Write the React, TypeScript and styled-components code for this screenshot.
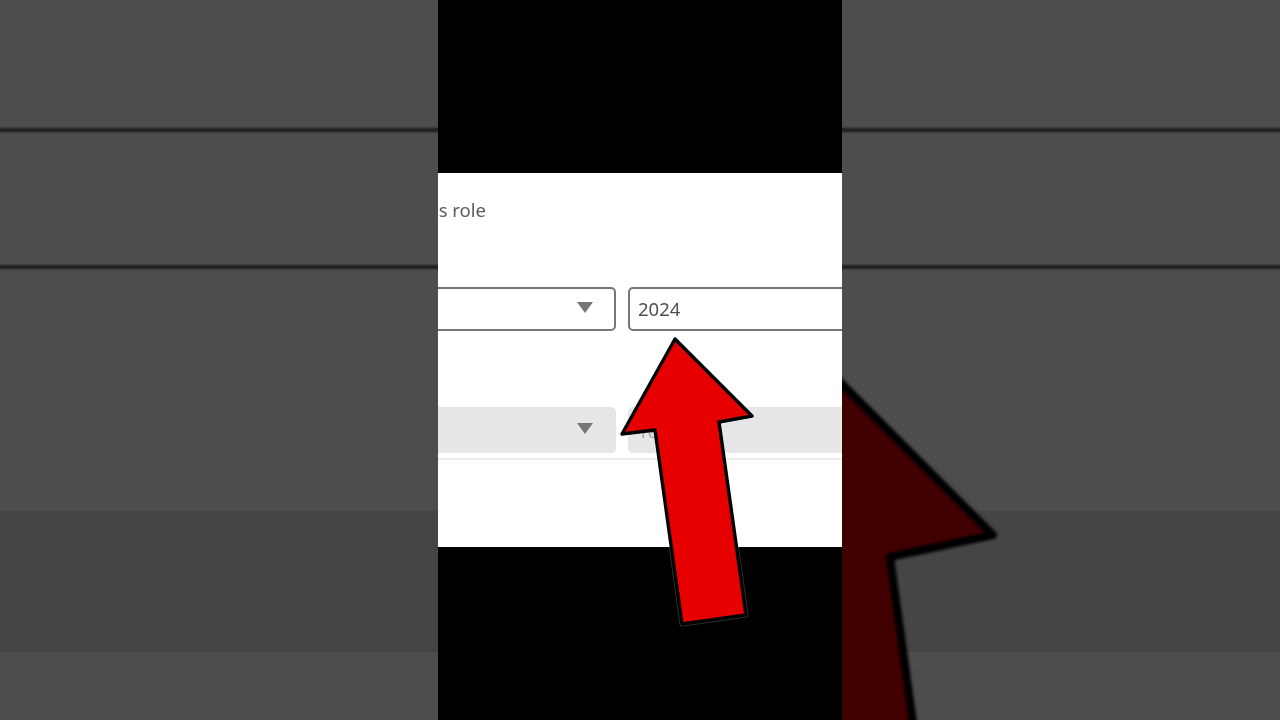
import styled, { createGlobalStyle } from "styled-components";

const GlobalStyle = createGlobalStyle`
    html, body {
        margin: 0;
        padding: 0;
        background: #000;
    }
    body {
        font-family: "Noto Sans", "Open Sans", sans-serif;
    }
`;

const Stage = styled.div`
    position: relative;
    display: flex;
    width: 1280px;
    height: 720px;
    overflow: hidden;
`;

const SidePanel = styled.div`
    position: relative;
    display: flex;
    flex-direction: column;
    width: 438px;
    height: 720px;
    background: #4d4d4d;
    overflow: hidden;
`;

const Spacer = styled.div<{ $h: number }>`
    height: ${(p) => p.$h}px;
    flex-shrink: 0;
`;

const Rule = styled.div`
    height: 4px;
    flex-shrink: 0;
    margin: 0 -6px;
    background: #1e1e1e;
    filter: blur(1px);
`;

const ShadeBand = styled.div`
    height: 141px;
    flex-shrink: 0;
    background: #454545;
`;

const FaintRule = styled.div`
    height: 2px;
    flex-shrink: 0;
    margin: 0 -6px;
    background: #484848;
    filter: blur(0.6px);
`;

const Center = styled.div`
    display: flex;
    flex-direction: column;
    width: 404px;
    height: 720px;
    background: #000;
`;

const Letterbox = styled.div`
    height: 173px;
    flex-shrink: 0;
    background: #000;
`;

const Card = styled.div`
    height: 374px;
    flex-shrink: 0;
    background: #fff;
    overflow: hidden;
`;

const CardInner = styled.div`
    display: flex;
    flex-direction: column;
    width: 812px;
    margin-left: -222px;
    padding-top: 23px;
`;

const Hint = styled.div`
    display: flex;
    justify-content: flex-end;
    width: 270px;
    height: 28px;
    line-height: 28px;
    font-size: 18.5px;
    color: #5c5c5c;
    white-space: nowrap;
    filter: blur(0.3px);
`;

const Row = styled.div<{ $top: number }>`
    display: grid;
    grid-template-columns: 400px 400px;
    gap: 12px;
    margin-top: ${(p) => p.$top}px;
`;

const Field = styled.div<{ $disabled?: boolean }>`
    display: flex;
    align-items: center;
    justify-content: space-between;
    box-sizing: border-box;
    height: ${(p) => (p.$disabled ? 46 : 44)}px;
    padding: ${(p) => (p.$disabled ? "0 23px 0 10px" : "0 21px 2px 8px")};
    border: ${(p) => (p.$disabled ? "none" : "2px solid #777")};
    border-radius: 5px;
    background: ${(p) => (p.$disabled ? "#e6e6e6" : "#fff")};
    color: ${(p) => (p.$disabled ? "#a8a8a8" : "#4f4f4f")};
    font-size: 18.5px;
    filter: blur(0.3px);
`;

const Caret = styled.span<{ $disabled?: boolean }>`
    width: 0;
    height: 0;
    margin-top: ${(p) => (p.$disabled ? -4 : -2)}px;
    border-left: 8.5px solid transparent;
    border-right: 8.5px solid transparent;
    border-top: 11px solid #767676;
`;

const Divider = styled.div`
    height: 2px;
    margin-top: 5px;
    background: #ececec;
`;

const PointerSvg = styled.svg`
    position: absolute;
    left: 612px;
    top: 330px;
    width: 150px;
    height: 304px;
`;

const BlurredPointer = styled.svg`
    position: absolute;
    left: -10px;
    top: 0;
    width: 448px;
    height: 740px;
    filter: blur(1.6px);
`;

const ARROW = "675,339 752,416 719,422 746,615 682,624 655,430 622,434";
const BIG_ARROW = "750,292 993,535 890,557 974,1162 700,1200 700,292";

function Side({ children }: { children?: React.ReactNode }) {
  return (
    <SidePanel>
      <Spacer $h={128} />
      <Rule />
      <Spacer $h={133} />
      <Rule />
      <Spacer $h={242} />
      <ShadeBand />
      <Spacer $h={19} />
      <FaintRule />
      {children}
    </SidePanel>
  );
}

export default function App() {
  return (
    <Stage>
      <GlobalStyle />
      <Side />
      <Center>
        <Letterbox />
        <Card>
          <CardInner>
            <Hint>this role</Hint>
            <Row $top={63}>
              <Field>
                <span />
                <Caret />
              </Field>
              <Field>2024</Field>
            </Row>
            <Row $top={76}>
              <Field $disabled>
                <span />
                <Caret $disabled />
              </Field>
              <Field $disabled>Year</Field>
            </Row>
            <Divider />
          </CardInner>
        </Card>
        <Letterbox />
      </Center>
      <Side>
        <BlurredPointer viewBox="832 0 448 740">
          <polygon
            points={BIG_ARROW}
            fill="#400000"
            stroke="#000"
            strokeWidth="8"
            strokeLinejoin="round"
          />
        </BlurredPointer>
      </Side>
      <PointerSvg viewBox="612 330 150 304">
        <polygon
          points={ARROW}
          fill="none"
          stroke="rgba(255,255,255,0.22)"
          strokeWidth="5"
          strokeLinejoin="round"
        />
        <polygon
          points={ARROW}
          fill="#e60000"
          stroke="#000"
          strokeWidth="3.4"
          strokeLinejoin="round"
        />
      </PointerSvg>
    </Stage>
  );
}
